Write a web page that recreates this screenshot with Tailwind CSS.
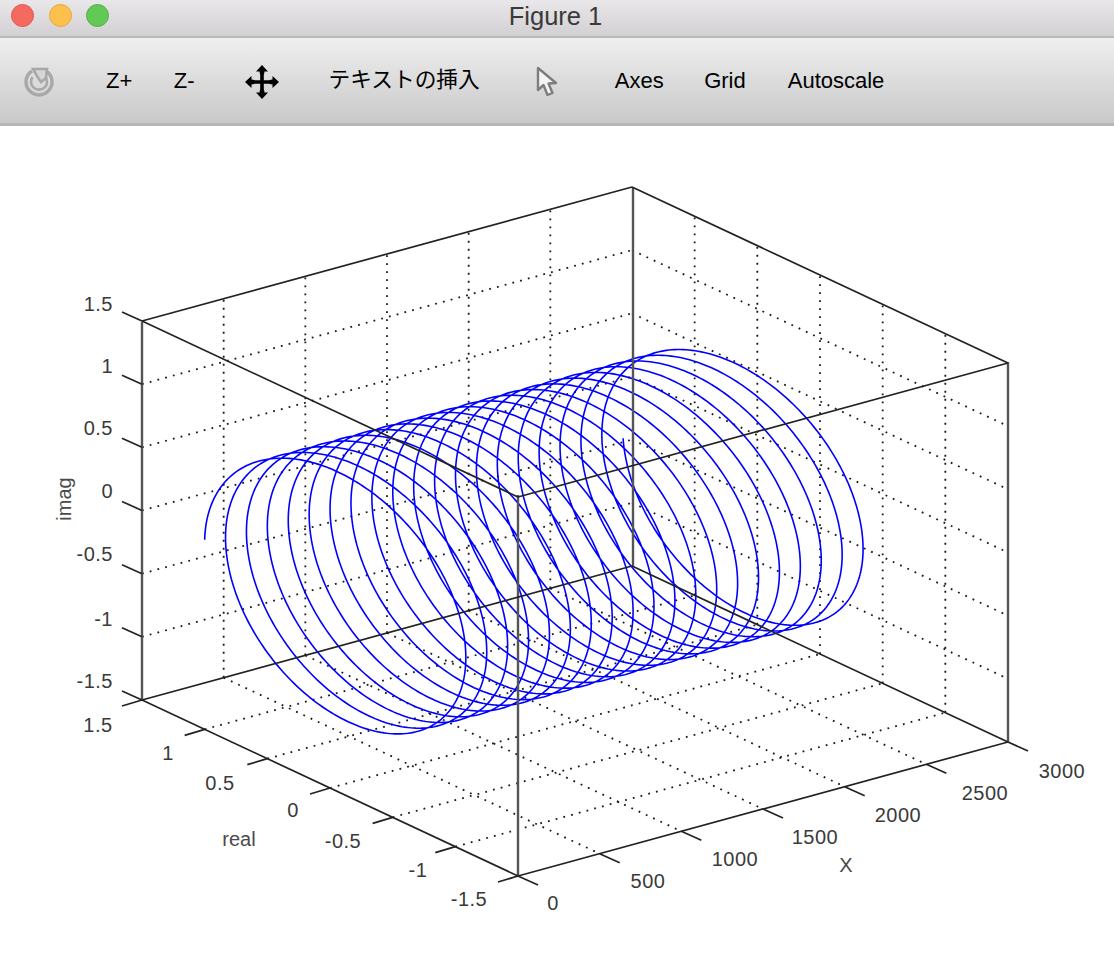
<!DOCTYPE html>
<html lang="en">
<head>
  <meta charset="UTF-8" />
  <title>Figure 1</title>
  <script src="https://cdn.jsdelivr.net/npm/@tailwindcss/browser@4"></script>
</head>
<body class="bg-white font-['Liberation_Sans','Noto_Sans_CJK_JP',sans-serif] text-black">
  <div class="flex flex-col w-[1114px] h-[966px] overflow-hidden">

    <!-- Title bar -->
    <header class="relative flex items-center justify-center h-[38px] shrink-0 bg-gradient-to-b from-[#e9e7e9] to-[#d2d0d2] border-b-2 border-[#b9b9b9]">
      <div class="absolute left-[11px] top-[4px] flex gap-[14.5px]">
        <span class="w-[23px] h-[23px] rounded-full bg-[#f46a60] border border-[#e0574d]"></span>
        <span class="w-[23px] h-[23px] rounded-full bg-[#fcc04d] border border-[#e5a93c]"></span>
        <span class="w-[23px] h-[23px] rounded-full bg-[#62c856] border border-[#53b247]"></span>
      </div>
      <span class="text-[25.5px] leading-none text-[#3a3a3a] -mt-[3px] -ml-[3px]">Figure 1</span>
    </header>

    <!-- Toolbar -->
    <nav class="flex items-center h-[88px] shrink-0 bg-gradient-to-b from-[#efefef] to-[#c9c9c9] border-b-[3px] border-[#b6b6b6] text-[22px]">
      <svg class="ml-[23px] mt-[3px] w-[32px] h-[32px] blur-[0.7px]" viewBox="0 0 32 32" fill="none" stroke="#a8a8a8">
        <path stroke-width="3.4" d="M9 5a13 13 0 1 0 14 0" />
        <path stroke-width="2.6" d="M9.500 11a8 8 0 1 0 13 0" />
        <path stroke-width="2.6" d="M10 3h14l-1 9-5 4-4-6z" fill="#d6d6d6" />
      </svg>
      <span class="ml-[51px]">Z+</span>
      <span class="ml-[41.5px]">Z-</span>
      <svg class="ml-[50px] mt-[3px] w-[34px] h-[34px] blur-[0.3px]" viewBox="0 0 34 34" fill="#000">
        <path d="M3 15.200h28v3.600H3zM15.200 4h3.600v26h-3.600z" />
        <path d="M17 0l6 6.500h-3.500l-.5 3h-4l-.5-3H11zM17 34l-6-6.500h3.500l.5-3h4l.5 3H23zM0 17l6.500-6v3.500l3 .5v4l-3 .5V23zM34 17l-6.500 6v-3.500l-3-.5v-4l3-.5V11z" />
      </svg>
      <span class="ml-[50px] text-[21.7px]">テキストの挿入</span>
      <svg class="ml-[55px] mt-[3px] w-[24px] h-[32px] blur-[0.4px]" viewBox="0 0 24 32">
        <path d="M3 2v22l5.500-5 4 10 5-2-4-9.500 7.500-.5z" fill="#f4f4f4" stroke="#7d7d7d" stroke-width="2.400" stroke-linejoin="round" />
      </svg>
      <span class="ml-[56px]">Axes</span>
      <span class="ml-[40.5px]">Grid</span>
      <span class="ml-[42px]">Autoscale</span>
    </nav>

    <!-- Plot area, drawn in window coordinates -->
    <svg class="w-[1114px] h-[840px] shrink-0" viewBox="0 126 1114 840">
      <g id="grid" fill="none" stroke="#1a1a1a" stroke-width="1.800" stroke-dasharray="1.800 6.200"></g>
      <polyline id="helix" fill="none" stroke="#0000ff" stroke-width="1.600" stroke-linejoin="round" />
      <g id="box" fill="none" stroke="#222" stroke-width="1.700">
        <path stroke="#555" stroke-width="2.400" d="M142 322V700M518 495V876M633 188V567M1008 362V742" />
      </g>
      <g class="text-[20px] fill-[#3a3a3a] tracking-[0.5px]">
        <g text-anchor="end">
          <text x="113" y="311">1.5</text>
          <text x="113" y="373">1</text>
          <text x="113" y="435">0.5</text>
          <text x="113" y="498">0</text>
          <text x="113" y="561">-0.5</text>
          <text x="113" y="626">-1</text>
          <text x="113" y="688">-1.5</text>
        </g>
        <g text-anchor="middle">
          <text x="98" y="732">1.5</text>
          <text x="168" y="760">1</text>
          <text x="220" y="790">0.5</text>
          <text x="293" y="817">0</text>
          <text x="343" y="848">-0.5</text>
          <text x="418" y="877">-1</text>
          <text x="469" y="906">-1.5</text>
          <text x="553" y="910">0</text>
          <text x="648" y="888">500</text>
          <text x="735" y="866">1000</text>
          <text x="815" y="844">1500</text>
          <text x="898" y="822">2000</text>
          <text x="985" y="800">2500</text>
          <text x="1062" y="778">3000</text>
        </g>
      </g>
      <g class="text-[20px] fill-[#4a4a4a]" text-anchor="middle">
        <text x="239" y="846">real</text>
        <text x="846" y="872">X</text>
        <text transform="translate(71 499) rotate(-90)">imag</text>
      </g>
    </svg>
  </div>

  <script>
    const NS = 'http://www.w3.org/2000/svg';

    // projection of the 3d axes box onto window pixels
    function proj(x, r, i) {
      return [
        518 + 490 * x / 3000 - 376 * (r + 1.5) / 3,
        876 - 134 * x / 3000 - 176 * (r + 1.5) / 3 - 379 * (i + 1.5) / 3,
      ];
    }

    function line(group, a, b) {
      const el = document.createElementNS(NS, 'line');
      el.setAttribute('x1', a[0]);
      el.setAttribute('y1', a[1]);
      el.setAttribute('x2', b[0]);
      el.setAttribute('y2', b[1]);
      group.appendChild(el);
    }

    const grid = document.getElementById('grid');
    const box = document.getElementById('box');
    const vals = [-1, -0.5, 0, 0.5, 1];
    const xs = [500, 1000, 1500, 2000, 2500];

    vals.forEach(v => {
      line(grid, proj(0, 1.5, v), proj(3000, 1.5, v));
      line(grid, proj(3000, 1.5, v), proj(3000, -1.5, v));
      line(grid, proj(0, v, -1.5), proj(3000, v, -1.5));
      line(grid, proj(3000, v, -1.5), proj(3000, v, 1.5));
    });
    xs.forEach(x => {
      line(grid, proj(x, 1.5, -1.5), proj(x, 1.5, 1.5));
      line(grid, proj(x, 1.5, -1.5), proj(x, -1.5, -1.5));
    });

    // box edges
    [-1.5, 1.5].forEach(i => {
      line(box, proj(0, 1.5, i), proj(3000, 1.5, i));
      line(box, proj(3000, 1.5, i), proj(3000, -1.5, i));
      line(box, proj(3000, -1.5, i), proj(0, -1.5, i));
      line(box, proj(0, -1.5, i), proj(0, 1.5, i));
    });

    // tick marks
    const all = [-1.5, ...vals, 1.5];
    all.forEach(v => {
      const a = proj(0, 1.5, v);
      line(box, a, [a[0] - 20, a[1] - 9]);
      const b = proj(0, v, -1.5);
      line(box, b, [b[0] - 20, b[1] + 6]);
    });
    [0, ...xs, 3000].forEach(x => {
      const c = proj(x, -1.5, -1.5);
      line(box, c, [c[0] + 20, c[1] + 9]);
    });

    // y = exp(j*2*pi*x/128), just short of 20 turns
    const pts = [];
    for (let x = 0; x <= 2558; x += 0.5) {
      const t = 2 * Math.PI * x / 128;
      pts.push(proj(x, Math.cos(t), Math.sin(t)).map(n => n.toFixed(2)).join(','));
    }
    document.getElementById('helix').setAttribute('points', pts.join(' '));
  </script>
</body>
</html>
